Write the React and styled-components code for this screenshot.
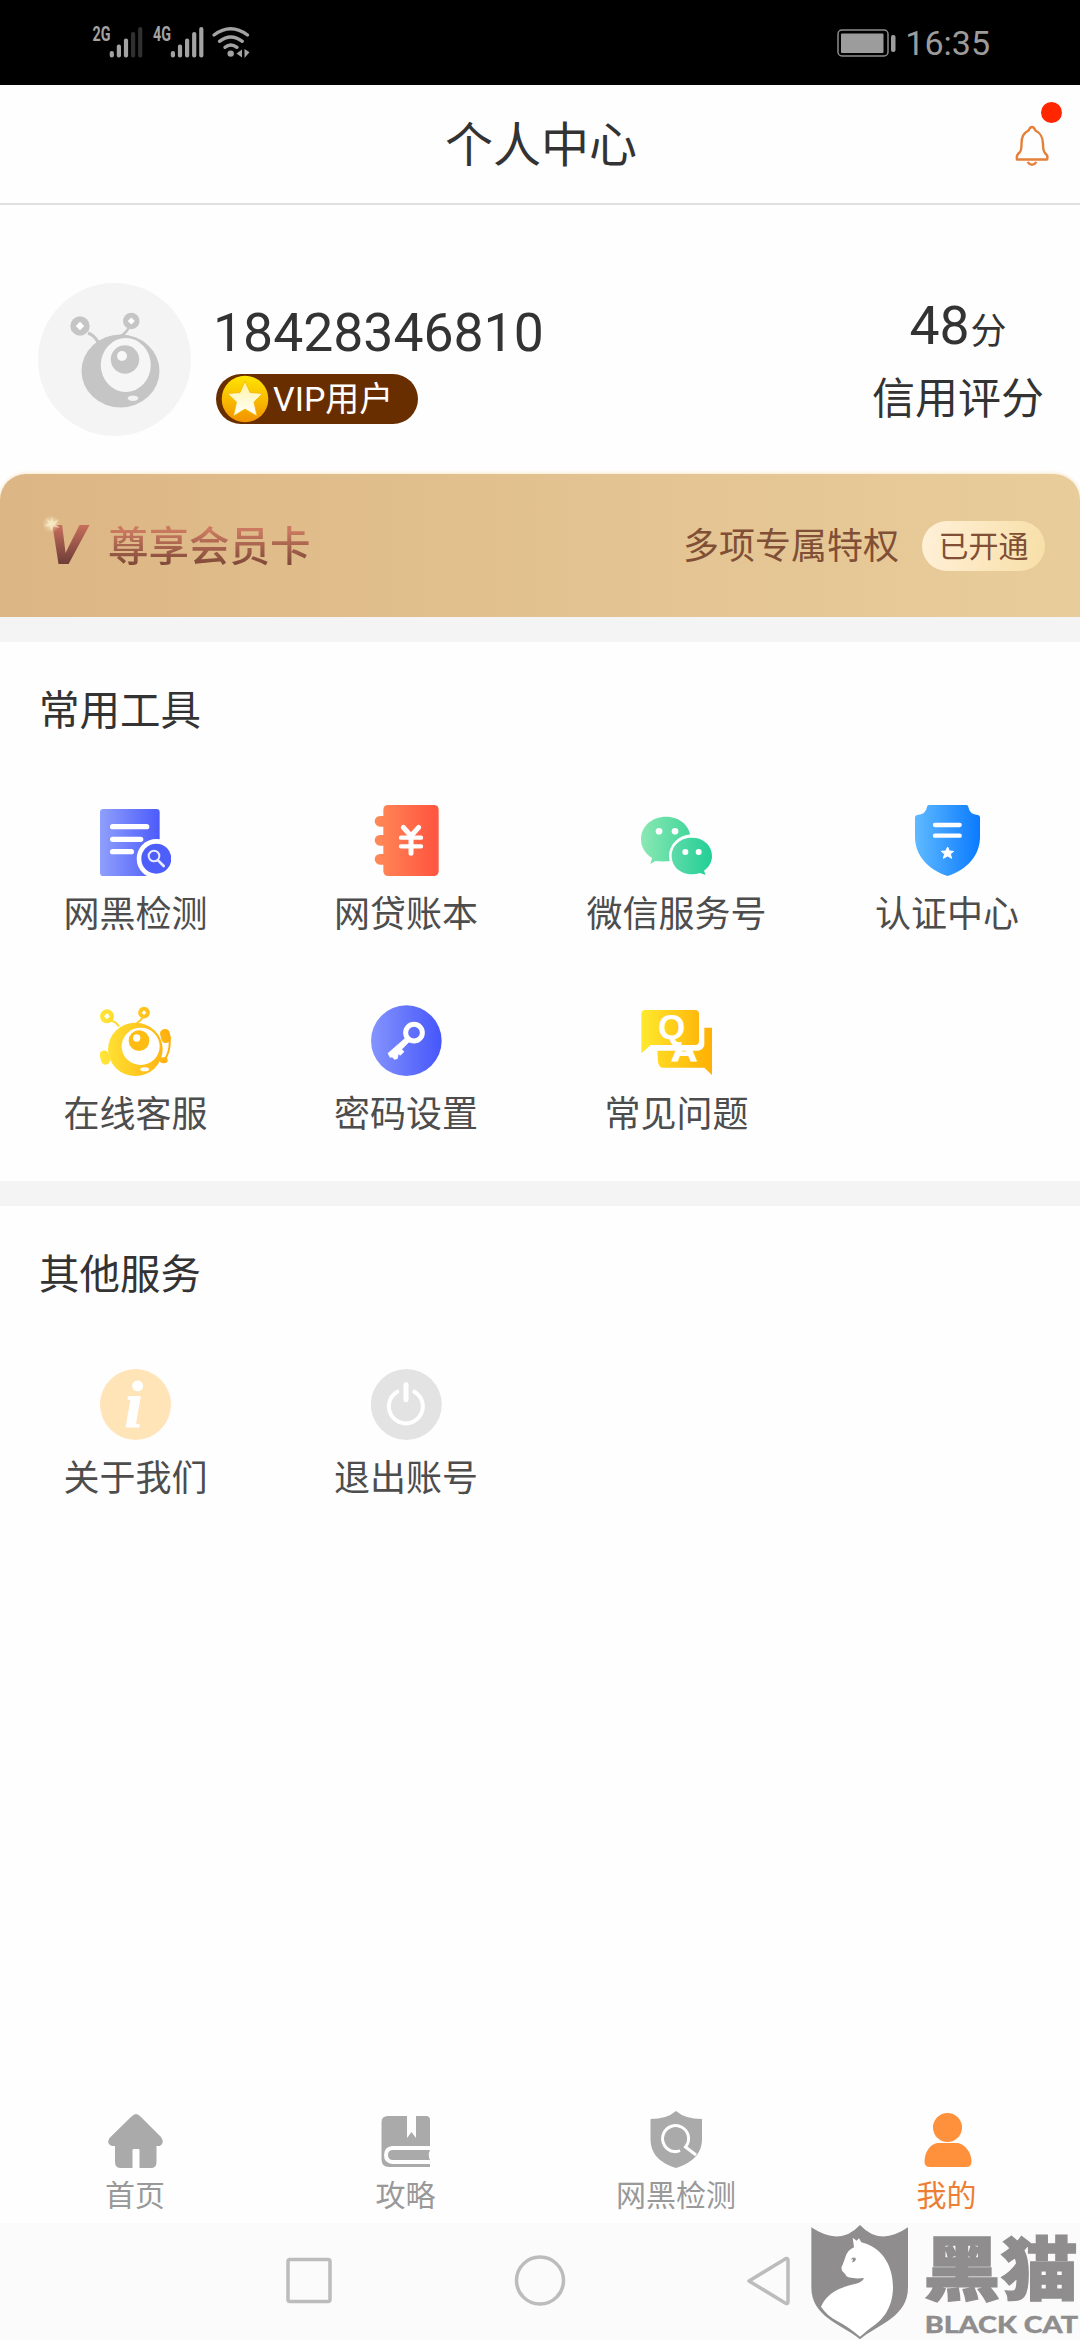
import styled, { createGlobalStyle, css } from 'styled-components';

const tools = [
    { name: '网黑检测', icon: DocIcon },
    { name: '网贷账本', icon: LedgerIcon },
    { name: '微信服务号', icon: ChatIcon },
    { name: '认证中心', icon: ShieldIcon },
    { name: '在线客服', icon: RobotIcon },
    { name: '密码设置', icon: KeyIcon },
    { name: '常见问题', icon: FaqIcon },
];

const services = [
    { name: '关于我们', icon: AboutIcon },
    { name: '退出账号', icon: PowerIcon },
];

const tabs = [
    { name: '首页', icon: HomeTab },
    { name: '攻略', icon: BookTab },
    { name: '网黑检测', icon: CheckTab },
    { name: '我的', icon: MineTab, active: true },
];

export default function App() {
    return (
        <Page>
            <GlobalStyle />
            <StatusBar>
                <SignalIcons />
                <StatusRight>
                    <Battery />
                    <Clock>16:35</Clock>
                </StatusRight>
            </StatusBar>

            <Header>
                <Title>个人中心</Title>
                <BellButton>
                    <BellIcon />
                    <Dot />
                </BellButton>
            </Header>

            <Profile>
                <Avatar>
                    <AvatarIcon />
                </Avatar>
                <UserInfo>
                    <Phone>18428346810</Phone>
                    <VipBadge>
                        <StarIcon />
                        VIP用户
                    </VipBadge>
                </UserInfo>
                <Score>
                    <ScoreValue>
                        48<small>分</small>
                    </ScoreValue>
                    <ScoreLabel>信用评分</ScoreLabel>
                </Score>
            </Profile>

            <MemberCard>
                <VIcon />
                <CardName>尊享会员卡</CardName>
                <CardDesc>多项专属特权</CardDesc>
                <CardState>已开通</CardState>
            </MemberCard>

            <Section $height={564}>
                <SectionTitle>常用工具</SectionTitle>
                <Grid>
                    {tools.map(({ name, icon: Icon }) => (
                        <Item key={name}>
                            <Icon />
                            <ItemName>{name}</ItemName>
                        </Item>
                    ))}
                </Grid>
            </Section>

            <Section>
                <SectionTitle>其他服务</SectionTitle>
                <Grid>
                    {services.map(({ name, icon: Icon }) => (
                        <Item key={name}>
                            <Icon />
                            <ItemName>{name}</ItemName>
                        </Item>
                    ))}
                </Grid>
            </Section>

            <TabBar>
                {tabs.map(({ name, icon: Icon, active }) => (
                    <Tab key={name} $active={active}>
                        <Icon />
                        <TabName>{name}</TabName>
                    </Tab>
                ))}
            </TabBar>

            <SystemNav>
                <NavKeys />
                <BlackCat />
            </SystemNav>
        </Page>
    );
}

/* ---------- icons ---------- */

function Gradient({ id, from, to, ...rest }) {
    return (
        <linearGradient id={id} {...rest}>
            <stop offset="0" stopColor={from} />
            <stop offset="1" stopColor={to} />
        </linearGradient>
    );
}

function SignalIcons() {
    const tops = [51, 44.5, 38.5, 32, 27];
    return (
        <svg width="260" height="85" viewBox="0 0 260 85">
            <g fill="#a3a3a3" fontFamily="Roboto, sans-serif" fontWeight="700" fontSize="19.5">
                <text x="92.500" y="41" textLength="18" lengthAdjust="spacingAndGlyphs">2G</text>
                <text x="153" y="41" textLength="18" lengthAdjust="spacingAndGlyphs">4G</text>
            </g>
            {tops.map((top, i) => (
                <g key={top} fill="#a3a3a3">
                    <rect x={109.7 + i * 7.1} y={top} width="4.2" height={57.5 - top} rx="2" fill={i > 2 ? '#303030' : '#a3a3a3'} />
                    <rect x={170.8 + i * 7.1} y={top} width="4.2" height={57.5 - top} rx="2" />
                </g>
            ))}
            <g fill="none" stroke="#a3a3a3" strokeWidth="3.4" strokeLinecap="round">
                <path d="M214 35 Q230.700 22.500 247.500 35" />
                <path d="M219.500 41.300 Q230.700 32.500 242.300 41.300" />
                <path d="M225 47.300 Q230.700 42.500 237 47.300" />
            </g>
            <circle cx="230.700" cy="53.600" r="3.200" fill="#a3a3a3" />
            <path d="M236.500 53.500 L242 49.500 V57.500 Z M244.500 49 L249.500 52.300 L247.500 54.500 L244.500 58 Z" fill="#a3a3a3" />
        </svg>
    );
}

function Battery() {
    return (
        <svg width="60" height="30" viewBox="0 0 60 30">
            <rect x="1" y="2" width="50" height="26" rx="4" fill="none" stroke="#8c8c8c" strokeWidth="1.500" />
            <rect x="4" y="5.500" width="42.500" height="19.500" rx="1" fill="#9c9c9c" />
            <rect x="54" y="7" width="4.500" height="17" rx="2" fill="#9c9c9c" />
        </svg>
    );
}

function BellIcon() {
    return (
        <svg width="36" height="44" viewBox="0 0 36 44">
            <g fill="none" stroke="#e4803a" strokeWidth="2.400" strokeLinejoin="round">
                <path d="M3 35.500 Q2 31 5.500 28.500 Q7.500 27 7.500 20 C7.500 12 10 9 14.500 6.500 Q16 3 18 3 Q20 3 21.500 6.500 C26 9 29 12 29 20 Q29 27 31 29 Q34.500 32 33 35.500 Z" />
                <path d="M13.500 38 Q18 43.500 22.500 38" />
            </g>
        </svg>
    );
}

function AvatarIcon() {
    return (
        <svg width="153" height="153" viewBox="0 0 153 153">
            <g fill="#c5c5c5">
                <circle cx="42" cy="43" r="9.700" />
                <circle cx="93.300" cy="38" r="8.300" />
                <path d="M50 50 Q56 52 60 59" fill="none" stroke="#c5c5c5" strokeWidth="3" />
                <path d="M91 44 Q89 49 83 53" fill="none" stroke="#c5c5c5" strokeWidth="2.500" />
                <ellipse cx="82.500" cy="88" rx="39" ry="36.500" />
            </g>
            <rect x="39" y="40" width="6" height="6" fill="#fff" transform="rotate(45 42 43)" />
            <rect x="90.800" y="35.500" width="5" height="5" fill="#fff" transform="rotate(45 93.300 38)" />
            <ellipse cx="87.800" cy="82" rx="25" ry="27" fill="#f6f6f6" />
            <circle cx="87" cy="76.500" r="14.200" fill="#c5c5c5" />
            <circle cx="84" cy="73" r="5" fill="#f8f8f8" />
            <ellipse cx="95" cy="115.200" rx="5.200" ry="2.800" fill="#f2f2f2" />
        </svg>
    );
}

function StarIcon() {
    return (
        <svg width="48" height="48" viewBox="0 0 48 48">
            <defs>
                <Gradient id="coin" from="#ffe600" to="#f29100" x1="0" y1="0" x2="0" y2="1" />
                <Gradient id="star" from="#fff3a0" to="#ffffff" x1="0" y1="0" x2="0" y2="1" />
            </defs>
            <circle cx="24" cy="24" r="23.300" fill="url(#coin)" />
            <path d="M24 6 L29 17.500 L41.500 18.500 L33 27 L36 41 L24 34 L12.500 41 L15.500 27 L6.500 18.500 L19 17.500 Z" fill="url(#star)" stroke="#f6b500" strokeWidth=".8" />
        </svg>
    );
}

function VIcon() {
    return (
        <svg width="50" height="73" viewBox="42 509 50 73">
            <defs>
                <Gradient id="vip" from="#c9705c" to="#6d3d38" gradientUnits="userSpaceOnUse" x1="0" y1="524" x2="0" y2="564" />
                <radialGradient id="shine">
                    <stop offset="0" stopColor="#fffbe8" />
                    <stop offset="1" stopColor="#fff3d0" stopOpacity="0" />
                </radialGradient>
            </defs>
            <text x="49" y="563" fontFamily="Liberation Sans, sans-serif" fontWeight="700" fontStyle="italic" fontSize="53" fill="url(#vip)" stroke="url(#vip)" strokeWidth="1.800">V</text>
            <circle cx="51" cy="524" r="9" fill="url(#shine)" opacity=".7" />
            <path d="M52 517 L53.500 522 L59 519 L55 524.500 L60 528 L53.500 526.500 L51 531 L50 526 L44 526 L49 523 L46 519 L51 521.500 Z" fill="#fbecc4" opacity=".7" />
        </svg>
    );
}

function DocIcon() {
    return (
        <ItemIcon viewBox="180 75 213 213">
            <defs>
                <Gradient id="doc" from="#8f9ffc" to="#4c5bfa" />
            </defs>
            <rect x="180" y="87" width="179" height="201" rx="10" fill="url(#doc)" />
            <g stroke="#fff" strokeWidth="16" strokeLinecap="round">
                <path d="M218 140 H320 M218 178 H302 M218 215 H274" />
            </g>
            <circle cx="349" cy="236" r="59" fill="#fff" />
            <circle cx="349" cy="236" r="45" fill="#4e5efa" />
            <g fill="none" stroke="#e9ebff" strokeLinecap="round">
                <circle cx="342" cy="228" r="16" strokeWidth="6" />
                <path d="M355 242 L371 258" strokeWidth="8" />
            </g>
        </ItemIcon>
    );
}

function LedgerIcon() {
    return (
        <ItemIcon viewBox="991 75 213 213">
            <defs>
                <Gradient id="ledger" from="#ff8a58" to="#ff5741" gradientUnits="userSpaceOnUse" x1="1002" x2="1180" y1="0" y2="0" />
            </defs>
            <g fill="url(#ledger)">
                <rect x="1028" y="75" width="166" height="213" rx="14" />
                <path d="M1030 108 H1018 A16 16 0 0 0 1018 140 H1030 Z M1030 165 H1018 A16 16 0 0 0 1018 197 H1030 Z M1030 222 H1018 A16 16 0 0 0 1018 254 H1030 Z" />
            </g>
            <g fill="none" stroke="#fff" strokeWidth="15" strokeLinecap="round">
                <path d="M1088 142 L1111 168 L1134 142 M1111 170 V220" />
                <path d="M1081 173 H1141 M1081 199 H1141" strokeWidth="13" />
            </g>
        </ItemIcon>
    );
}

function ChatIcon() {
    return (
        <ItemIcon viewBox="243 75 213 213">
            <defs>
                <Gradient id="chat1" from="#8be8b4" to="#43d69b" />
                <Gradient id="chat2" from="#5ddba9" to="#22cf96" />
            </defs>
            <path d="M243 178 C243 138 276 110 318 110 C360 110 392 138 392 178 C392 218 360 244 318 244 Q302 245 286 243 L271 252 L276 234 C256 222 243 202 243 178 Z" fill="url(#chat1)" />
            <ellipse cx="396" cy="228" rx="69" ry="65" fill="#fff" />
            <path d="M335 228 C335 196 362 173 396 173 C430 173 456 196 456 228 C456 246 447 262 432 272 L437 285 L420 279 Q409 283 396 283 C362 283 335 260 335 228 Z" fill="url(#chat2)" />
            <g fill="#fff">
                <circle cx="297" cy="154" r="10" />
                <circle cx="345" cy="154" r="10" />
                <circle cx="376" cy="216" r="9" />
                <circle cx="416" cy="216" r="9" />
            </g>
        </ItemIcon>
    );
}

function ShieldIcon() {
    return (
        <ItemIcon viewBox="1053 75 213 213">
            <defs>
                <Gradient id="shield" from="#5fbaff" to="#0a7aff" />
            </defs>
            <path d="M1104 75 H1216 Q1222 75 1222 81 Q1226 104 1250 105 Q1257 106 1257 112 V170 C1257 225 1220 268 1160 288 C1100 268 1062 225 1062 170 V112 Q1062 106 1069 105 Q1094 104 1098 81 Q1098 75 1104 75 Z" fill="url(#shield)" />
            <path d="M1122 135 H1196 M1122 167 H1196" stroke="#fff" strokeWidth="13" strokeLinecap="round" />
            <path d="M1160 201 L1165 213 L1178 214 L1168 222 L1172 235 L1160 228 L1147 235 L1151 222 L1141 214 L1154 213 Z" fill="#fff" stroke="#fff" strokeWidth="3" strokeLinejoin="round" />
        </ItemIcon>
    );
}

function RobotIcon() {
    return (
        <ItemIcon viewBox="180 75 213 213">
            <defs>
                <Gradient id="robot" from="#ffe638" to="#ffae0c" gradientUnits="userSpaceOnUse" x1="180" x2="393" y1="0" y2="0" />
            </defs>
            <g fill="url(#robot)">
                <circle cx="201" cy="109" r="21" />
                <circle cx="312" cy="98" r="17.500" />
                <ellipse cx="286" cy="208" rx="82" ry="80" />
                <rect x="181" y="211" width="27" height="43" rx="13" transform="rotate(-14 195 232)" />
                <rect x="362" y="147" width="29" height="42" rx="13" transform="rotate(-14 376 168)" />
                <ellipse cx="371" cy="241" rx="12" ry="9" />
            </g>
            <g fill="none" stroke="url(#robot)" strokeWidth="6">
                <path d="M214 122 Q230 126 237 140 M308 112 Q304 121 290 129" />
                <path d="M389 180 Q391 214 374 239" />
            </g>
            <path d="M372 192 Q380 208 372 228" fill="none" stroke="#fff" strokeWidth="6" />
            <path d="M201 100 L210 109 L201 118 L192 109 Z M312 91 L319 98 L312 105 L305 98 Z" fill="#fff" />
            <ellipse cx="302" cy="199" rx="57" ry="56" fill="#fff" />
            <circle cx="297" cy="182" r="31" fill="#ffbd14" />
            <circle cx="290" cy="174" r="11" fill="#fff" />
            <ellipse cx="314" cy="268" rx="13" ry="6" fill="#fff" />
        </ItemIcon>
    );
}

function KeyIcon() {
    return (
        <ItemIcon viewBox="991 75 213 213">
            <defs>
                <Gradient id="key" from="#8494fd" to="#4656fa" />
            </defs>
            <circle cx="1097" cy="182" r="106" fill="url(#key)" />
            <circle cx="1120" cy="158" r="25" fill="none" stroke="#fff" strokeWidth="15" />
            <path d="M1097 172 L1108 183 L1083 208 L1090 215 L1079 226 L1073 221 L1070 236 L1061 238 L1055 231 L1048 232 L1042 220 Z" fill="#fff" stroke="#fff" strokeWidth="2" strokeLinejoin="round" />
        </ItemIcon>
    );
}

function FaqIcon() {
    return (
        <ItemIcon viewBox="183 75 213 213">
            <defs>
                <Gradient id="faqQ" from="#ffe92e" to="#ffb80c" />
                <Gradient id="faqA" from="#ffd822" to="#ffb003" />
            </defs>
            <path d="M232 212 H355 Q373 208 373 192 V143 H396 V285 L373 263 H250 Q236 263 234 245 Z" fill="url(#faqA)" />
            <g fontFamily="Liberation Sans, sans-serif" fontWeight="700" fill="#fff" textAnchor="middle">
                <text x="313" y="244" fontSize="92" textLength="78" lengthAdjust="spacingAndGlyphs" stroke="#fff" strokeWidth="3">A</text>
                <path d="M184 102 Q184 90 196 90 H345 Q357 90 357 102 V183 Q357 195 345 195 H212 L184 220 Z" fill="url(#faqQ)" />
                <text x="275" y="177" fontSize="104" textLength="82" lengthAdjust="spacingAndGlyphs">Q</text>
            </g>
        </ItemIcon>
    );
}

function AboutIcon() {
    return (
        <ItemIcon viewBox="180 87 213 213">
            <circle cx="286.500" cy="193.500" r="106.500" fill="#ffe4b8" />
            <text x="281" y="260" textAnchor="middle" fontFamily="Liberation Serif, serif" fontWeight="700" fontStyle="italic" fontSize="198" fill="#fff" stroke="#fff" strokeWidth="3">i</text>
        </ItemIcon>
    );
}

function PowerIcon() {
    return (
        <ItemIcon viewBox="991 87 213 213">
            <circle cx="1097" cy="193.500" r="106.500" fill="#e3e3e3" />
            <g fill="none" stroke="#fff" strokeWidth="12" strokeLinecap="round">
                <path d="M1070 155 A51 51 0 1 0 1121 155" />
                <path d="M1096 134 V179" strokeWidth="15" />
            </g>
        </ItemIcon>
    );
}

function HomeTab() {
    return (
        <TabIcon viewBox="105 2108 60 62">
            <path d="M136 2114 Q138 2114 141 2117 L161 2137 Q165 2143 160 2146 H156.500 V2162 Q156.500 2168 151 2168 H139.500 V2150 Q139.500 2149 138.500 2149 H134 Q132.500 2149 132.500 2150 V2168 H121 Q115 2168 115 2162 V2146 H112 Q106 2144 109.500 2138 L131 2117 Q134 2114 136 2114 Z" />
        </TabIcon>
    );
}

function BookTab() {
    return (
        <TabIcon viewBox="376 2108 60 62">
            <path d="M388 2116 H407 V2138 L411.500 2132 L416 2138 V2116 H426 Q430 2116 430 2120 V2146 H392 Q384 2147 384 2155 Q384 2163 392 2164 H430 V2167 H389 Q381.500 2167 381.500 2159 V2122 Q381.500 2116 388 2116 Z" />
            <path d="M393 2150 H430 Q427.500 2155 430 2160 H393 Q388 2160 388 2155 Q388 2150 393 2150 Z" />
        </TabIcon>
    );
}

function CheckTab() {
    return (
        <TabIcon viewBox="646 2108 60 62">
            <path d="M676 2111 Q685 2119 702 2119 V2139 C702 2154 692 2163 676 2168 C660 2163 650.500 2154 650.500 2139 V2119 Q667 2119 676 2111 Z" />
            <path d="M680 2150.500 Q677 2152 674 2151.500 A13 13 0 1 1 685.500 2147 L696 2155" fill="none" stroke="#fff" strokeWidth="3" />
        </TabIcon>
    );
}

function MineTab() {
    return (
        <TabIcon viewBox="917 2108 60 62">
            <ellipse cx="947.500" cy="2127.500" rx="14.500" ry="14.500" />
            <path d="M937 2143 H958 C966 2145 971.500 2153 971.500 2162 Q971.500 2167 966 2167 H930 Q924.500 2167 924.500 2162 C924.500 2153 929 2145 937 2143 Z" />
        </TabIcon>
    );
}

function NavKeys() {
    return (
        <svg width="1080" height="117" viewBox="0 2223 1080 117">
            <g fill="none" stroke="#bcbcbc" strokeWidth="3.500" strokeLinejoin="round">
                <rect x="288" y="2259.500" width="42" height="42" rx="2" />
                <circle cx="540" cy="2280.500" r="23.500" />
                <path d="M749 2281 L786 2258.500 Q788 2258 788 2260.500 V2301.500 Q788 2304 786 2303.500 Z" />
            </g>
        </svg>
    );
}

function BlackCat() {
    return (
        <Mark viewBox="210 60 810 360">
            <path d="M214 82 Q300 140 360 75 Q420 140 504 82 V262 C504 350 420 370 360 418 C300 370 214 350 214 262 Z" fill="#8f8d8e" />
            <path d="M338 113 L350 122 L357 115 L364 127 C420 140 459 190 459 262 C459 325 425 360 408 372 Q380 392 360 410 Q325 380 290 362 Q262 348 243 320 C262 278 300 262 345 252 Q368 246 372 234 Q345 237 325 232 Q318 231 316 223 L306 212 Q302 200 308 194 L316 172 Q322 150 342 142 Z" fill="#fff" />
            <path d="M332 180 Q338 168 348 176 Q346 186 336 187 Q340 180 338 176 Z" fill="#8f8d8e" />
            <g fill="#8f8d8e" stroke="#8f8d8e" fontWeight="900">
                <text x="550" y="285" fontFamily="'Noto Sans CJK SC', sans-serif" fontSize="208" strokeWidth="4" textLength="464" lengthAdjust="spacingAndGlyphs">黑猫</text>
                <text x="554" y="398" fontFamily="Lato, sans-serif" fontSize="68" strokeWidth="1" textLength="460" lengthAdjust="spacingAndGlyphs">BLACK CAT</text>
            </g>
        </Mark>
    );
}

/* ---------- styles ---------- */

const GlobalStyle = createGlobalStyle`
    * {
        box-sizing: border-box;
    }

    body {
        margin: 0;
        background: #fff;
        font-family: Roboto, 'Noto Sans CJK SC', sans-serif;
        color: #333;
    }

    svg {
        display: block;
        flex-shrink: 0;
    }
`;

const Page = styled.div`
    display: flex;
    flex-direction: column;
    width: 1080px;
    height: 2340px;
    overflow: hidden;
    background: #fefefe;
`;

const StatusBar = styled.div`
    display: flex;
    justify-content: space-between;
    height: 85px;
    background: #000;
`;

const StatusRight = styled.div`
    display: flex;
    align-items: center;
    gap: 8px;
    padding-right: 90px;
`;

const Clock = styled.span`
    font-size: 34px;
    line-height: 40px;
    color: #9c9c9c;
`;

const Header = styled.header`
    position: relative;
    display: flex;
    justify-content: center;
    align-items: center;
    height: 120px;
    padding: 3px 0 0 2px;
    border-bottom: 2px solid #e0e0e0;
`;

const Title = styled.h1`
    margin: 0;
    font-size: 48px;
    font-weight: 400;
    line-height: 60px;
`;

const BellButton = styled.div`
    position: absolute;
    top: 39px;
    right: 30px;
`;

const Dot = styled.span`
    position: absolute;
    top: -22px;
    right: -12px;
    width: 21px;
    height: 21px;
    border-radius: 50%;
    background: #ff2600;
`;

const Profile = styled.section`
    display: flex;
    height: 269px;
    padding: 78px 36px 0 38px;
`;

const Avatar = styled.div`
    width: 153px;
    height: 153px;
    border-radius: 50%;
    background: #f4f4f4;
`;

const UserInfo = styled.div`
    display: flex;
    flex-direction: column;
    align-items: flex-start;
    padding: 18px 0 0 22px;
`;

const Phone = styled.div`
    font-size: 53.5px;
    line-height: 64px;
`;

const VipBadge = styled.div`
    display: flex;
    align-items: center;
    gap: 4px;
    width: 202px;
    height: 50px;
    margin: 9px 0 0 3px;
    padding-left: 5px;
    border-radius: 25px;
    background: #682e00;
    color: #fff;
    font-size: 34px;
    line-height: 50px;
    white-space: nowrap;
`;

const Score = styled.div`
    margin-left: auto;
    padding-top: 11px;
    text-align: center;
`;

const ScoreValue = styled.div`
    height: 64px;
    font-size: 53.5px;
    line-height: 64px;

    small {
        margin-left: 1px;
        font-size: 36px;
    }
`;

const ScoreLabel = styled.div`
    margin-top: 16px;
    font-size: 43px;
    line-height: 50px;
`;

const MemberCard = styled.section`
    display: flex;
    align-items: center;
    height: 143px;
    padding: 0 35px 0 42px;
    border-radius: 26px 26px 0 0;
    background: linear-gradient(90deg, #dcb684, #e8cd9b);
    box-shadow: 0 0 4px #f5dfb5;
`;

const CardName = styled.div`
    margin: 2px 0 0 16px;
    font-size: 40.5px;
    font-weight: 500;
    line-height: 56px;
    background: linear-gradient(180deg, #cb7a61 20%, #7b4636 85%);
    background-clip: text;
    -webkit-background-clip: text;
    color: transparent;
`;

const CardDesc = styled.div`
    margin: 2px 0 0 auto;
    font-size: 36px;
    line-height: 50px;
    color: #814f35;
`;

const CardState = styled.div`
    width: 123px;
    height: 50px;
    margin-left: 23px;
    border-radius: 25px;
    background: linear-gradient(100deg, #fff0d8, #f8dfa7);
    color: #814f35;
    font-size: 30px;
    line-height: 51px;
    text-align: center;
`;

const Section = styled.section`
    height: ${({ $height }) => ($height ? `${$height}px` : 'auto')};
    border-top: 25px solid #f4f4f4;
`;

const SectionTitle = styled.h2`
    margin: 0;
    padding: 39px 0 0 39px;
    font-size: 40.5px;
    font-weight: 400;
    line-height: 60px;
`;

const Grid = styled.div`
    display: grid;
    grid-template-columns: 271px 270px 271px 270px;
    grid-auto-rows: 200px;
    padding-top: 64px;
`;

const Item = styled.div`
    display: flex;
    flex-direction: column;
    align-items: center;
`;

const ItemIcon = styled.svg`
    width: 71px;
    height: 71px;
`;

const ItemName = styled.div`
    margin-top: 14px;
    font-size: 36px;
    line-height: 50px;
    color: #4d4d4d;
`;

const TabBar = styled.nav`
    display: grid;
    grid-template-columns: 270px 271px 270px 271px;
    height: 117px;
    margin-top: auto;
`;

const Tab = styled.div`
    display: flex;
    flex-direction: column;
    align-items: center;
    color: #999;
    fill: #aaa;

    ${({ $active }) =>
        $active &&
        css`
            color: #ec7f33;
            fill: #ff903c;
        `}
`;

const TabIcon = styled.svg`
    width: 60px;
    height: 62px;
    margin-top: 2px;
`;

const TabName = styled.div`
    margin-top: 6px;
    font-size: 30px;
    line-height: 40px;
`;

const SystemNav = styled.div`
    position: relative;
    height: 117px;
    background: #fbfbfb;
`;

const Mark = styled.svg`
    position: absolute;
    right: 0;
    bottom: 0;
    width: 270px;
    height: 120px;
    overflow: visible;
`;
